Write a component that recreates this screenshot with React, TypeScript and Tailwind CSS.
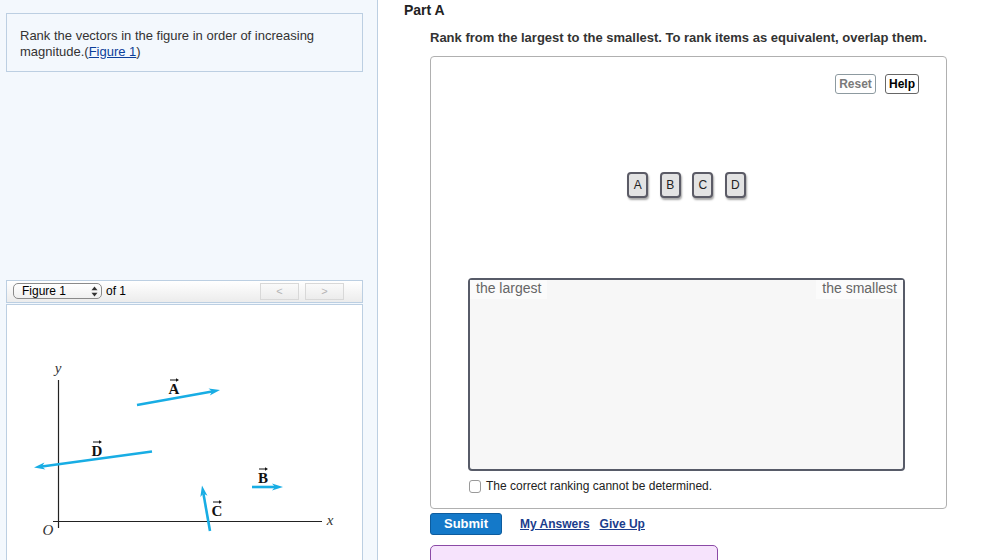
import React from "react";

const TILES = ["A", "B", "C", "D"];

function Arrow({ x1, y1, x2, y2 }: { x1: number; y1: number; x2: number; y2: number }) {
  // line with a filled head at (x2, y2)
  const dx = x2 - x1;
  const dy = y2 - y1;
  const len = Math.hypot(dx, dy);
  const ux = dx / len;
  const uy = dy / len;
  const hl = 11;
  const hw = 3.6;
  const bx = x2 - ux * hl;
  const by = y2 - uy * hl;
  const pts = `${x2},${y2} ${bx - uy * hw},${by + ux * hw} ${bx + ux * 3},${by + uy * 3} ${bx + uy * hw},${by - ux * hw}`;
  return (
    <g>
      <line x1={x1} y1={y1} x2={bx + ux * 3} y2={by + uy * 3} stroke="#18ade4" strokeWidth={2.6} />
      <polygon points={pts} fill="#18ade4" />
    </g>
  );
}

function VecLabel({ x, y, ch }: { x: number; y: number; ch: string }) {
  return (
    <g>
      <text
        x={x}
        y={y}
        textAnchor="middle"
        fontFamily="'Liberation Serif', serif"
        fontWeight="bold"
        fontSize="15"
        fill="#111"
      >
        {ch}
      </text>
      <line x1={x - 4} y1={y - 14} x2={x + 3} y2={y - 14} stroke="#111" strokeWidth={1} />
      <polygon points={`${x + 5},${y - 14} ${x + 2},${y - 15.8} ${x + 2},${y - 12.2}`} fill="#111" />
    </g>
  );
}

function FigureDrawing() {
  return (
    <svg viewBox="7 305 355 255" className="block h-[255px] w-[355px]">
      <line x1={58.5} y1={380} x2={58.5} y2={528} stroke="#222" strokeWidth={1.2} />
      <line x1={53} y1={521.5} x2={322} y2={521.5} stroke="#222" strokeWidth={1.2} />
      <text x={330} y={525} textAnchor="middle" fontFamily="'Liberation Serif', serif" fontStyle="italic" fontSize="15" fill="#333">
        x
      </text>
      <text x={58} y={373} textAnchor="middle" fontFamily="'Liberation Serif', serif" fontStyle="italic" fontSize="15" fill="#333">
        y
      </text>
      <text x={48} y={535} textAnchor="middle" fontFamily="'Liberation Serif', serif" fontStyle="italic" fontSize="15" fill="#333">
        O
      </text>
      <Arrow x1={137} y1={405} x2={220} y2={390} />
      <Arrow x1={152} y1={451.5} x2={34} y2={467.5} />
      <Arrow x1={252} y1={487} x2={283} y2={487} />
      <Arrow x1={210} y1={531} x2={202} y2={485.5} />
      <VecLabel x={174} y={394} ch="A" />
      <VecLabel x={97} y={456} ch="D" />
      <VecLabel x={263} y={483} ch="B" />
      <VecLabel x={217} y={516} ch="C" />
    </svg>
  );
}

export default function App() {
  return (
    <div className="flex h-[560px] w-[999px] overflow-hidden bg-white font-['Liberation_Sans',Arial,sans-serif] text-[#333]">
      {/* left: problem text + figure */}
      <aside className="flex h-full w-[378px] shrink-0 flex-col border-r border-[#bccfe2] bg-[#f3f8fd] pl-[6px] pr-[14px] pt-[13px]">
        <div className="h-[60px] border border-[#bccfe2] px-[13px] pt-[14px] text-[13px] leading-[16px]">
          <span>Rank the vectors in the figure in order of increasing magnitude.(</span>
          <a href="#" className="text-[#0d3f9a] underline">
            Figure 1
          </a>
          <span>)</span>
        </div>

        <div className="mt-[208px] flex h-[24px] items-center border border-[#bccfe2] bg-gradient-to-b from-white to-[#ececec] pl-[6px] pr-[18px]">
          <div className="flex h-[16px] w-[89px] items-center justify-between rounded-[5px] border border-[#8a8a8a] bg-gradient-to-b from-white to-[#f0f0f0] pl-[8px] pr-[3px] text-[12px] leading-none text-black">
            <span>Figure 1</span>
            <svg width="7" height="11" viewBox="0 0 7 11">
              <polygon points="3.5,0.5 6.5,4.3 0.5,4.3" fill="#333" />
              <polygon points="3.5,10.5 6.5,6.7 0.5,6.7" fill="#333" />
            </svg>
          </div>
          <span className="ml-[4px] text-[12px] text-black">of 1</span>
          <div className="ml-auto flex gap-[6px]">
            <button className="flex h-[17px] w-[39px] items-center justify-center border border-[#d8d8d8] bg-gradient-to-b from-[#fafafa] to-[#ececec] text-[11px] text-[#b5b5b5]">
              &lt;
            </button>
            <button className="flex h-[17px] w-[39px] items-center justify-center border border-[#d8d8d8] bg-gradient-to-b from-[#fafafa] to-[#ececec] text-[11px] text-[#b5b5b5]">
              &gt;
            </button>
          </div>
        </div>

        <div className="mt-[1px] flex-1 border border-b-0 border-[#bccfe2] bg-white">
          <FigureDrawing />
        </div>
      </aside>

      {/* right: Part A */}
      <main className="flex-1 pl-[26px] pt-[2px]">
        <h2 className="text-[14px] font-bold leading-[17px] text-[#222]">Part A</h2>
        <div className="pl-[26px]">
          <p className="mt-[11px] text-[13px] font-bold leading-[16px] text-[#333]">
            Rank from the largest to the smallest. To rank items as equivalent, overlap them.
          </p>

          <section className="mt-[10px] h-[453px] w-[517px] rounded-[4px] border border-[#b0b0b0] bg-white">
            <div className="flex justify-end gap-[9px] pr-[27px] pt-[17px]">
              <button className="h-[20px] w-[41px] rounded-[3px] border border-[#8d9aa0] bg-white text-[12px] font-bold text-[#7a7a7a]">
                Reset
              </button>
              <button className="h-[20px] w-[34px] rounded-[3px] border border-[#666] bg-white text-[12px] font-bold text-black">
                Help
              </button>
            </div>

            <div className="ml-[37px] w-[437px]">
              <div className="mt-[78px] flex justify-center gap-[11.5px]">
                {TILES.map((t) => (
                  <div
                    key={t}
                    className="flex h-[26px] w-[21px] items-center justify-center rounded-[4px] border-2 border-[#5b5b66] bg-[#e3e3e3] text-[12px] text-[#222] shadow-[1px_2px_2px_rgba(0,0,0,0.35)]"
                  >
                    {t}
                  </div>
                ))}
              </div>

              <div className="mt-[80px] flex h-[193px] items-start justify-between rounded-[4px] border-2 border-[#575b68] bg-[#f7f7f7]">
                <span className="bg-[#fbfbfb] px-[6px] pb-[3px] text-[14px] leading-[16px] text-[#666]">
                  the largest
                </span>
                <span className="bg-[#fbfbfb] px-[6px] pb-[3px] text-[14px] leading-[16px] text-[#666]">
                  the smallest
                </span>
              </div>

              <label className="mt-[6px] flex items-center gap-[5px] text-[12px] text-[#222]">
                <span className="ml-[1px] h-[13px] w-[12px] rounded-[3px] border border-[#9a9a9a] bg-white" />
                The correct ranking cannot be determined.
              </label>
            </div>
          </section>

          <div className="mt-[4px] flex items-center">
            <button className="h-[22px] w-[72px] rounded-[3px] border border-[#0d5c9e] bg-[#1479c9] text-[13px] font-bold text-white">
              Submit
            </button>
            <a href="#" className="ml-[18px] text-[12px] font-bold text-[#1a3c8c] underline">
              My Answers
            </a>
            <a href="#" className="ml-[10px] text-[12px] font-bold text-[#1a3c8c] underline">
              Give Up
            </a>
          </div>

          <div className="mt-[10px] h-[40px] w-[288px] rounded-t-[5px] border border-[#8b4aa6] bg-[#f6e3fc]" />
        </div>
      </main>
    </div>
  );
}
